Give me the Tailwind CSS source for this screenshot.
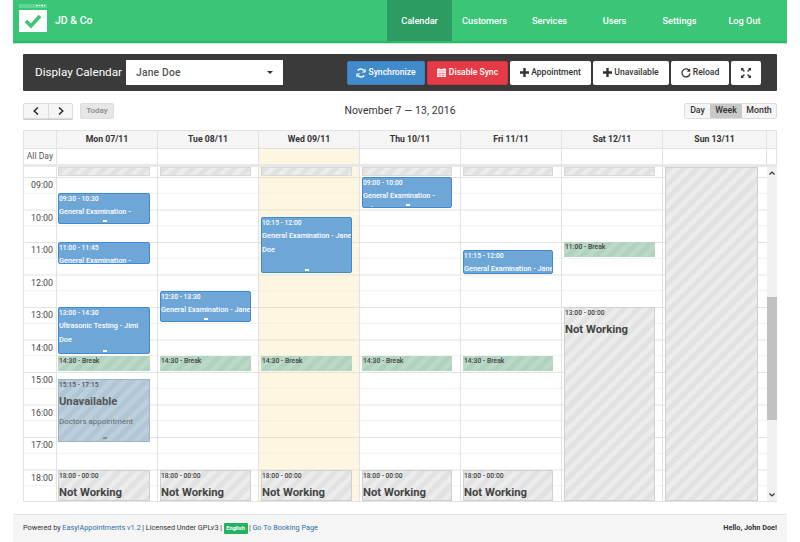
<!DOCTYPE html>
<html>
<head>
<meta charset="utf-8">
<script src="https://cdn.jsdelivr.net/npm/@tailwindcss/browser@4"></script>
</head>
<body class="bg-white font-['Roboto',sans-serif] text-[#333] w-[800px] h-[542px] overflow-hidden relative">

<header class="mx-[13px] h-[43px] flex bg-[#3ac577] border-b-2 border-[#2fb86c] shadow-[0_1px_0_#b8f0d0]">
  <div class="flex items-center flex-1 pl-[6px]">
    <div class="flex flex-col w-[28px] mt-[-6px]">
      <div class="h-[4px] bg-[#5fd695] flex justify-end items-center gap-[1px] pr-[2px]">
        <span class="w-[1.5px] h-[1.5px] bg-white"></span><span class="w-[1.5px] h-[1.5px] bg-white"></span><span class="w-[1.5px] h-[1.5px] bg-white"></span><span class="w-[1.5px] h-[1.5px] bg-white"></span>
      </div>
      <div class="h-[2px]"></div>
      <div class="h-[22px] bg-white flex items-center justify-center">
        <svg width="18" height="16" viewBox="0 0 18 16"><path d="M2 8 L7 13 L16 3" fill="none" stroke="#3ac577" stroke-width="3.6"/></svg>
      </div>
    </div>
    <span class="ml-[8px] text-[10.5px] text-white font-medium">JD &amp; Co</span>
  </div>
  <nav class="flex mr-[10px] text-[9.2px] font-medium text-white">
    <a class="w-[65px] h-[41px] flex items-center justify-center bg-[#2c9c62]">Calendar</a>
    <a class="w-[65px] h-[41px] flex items-center justify-center">Customers</a>
    <a class="w-[65px] h-[41px] flex items-center justify-center">Services</a>
    <a class="w-[65px] h-[41px] flex items-center justify-center">Users</a>
    <a class="w-[65px] h-[41px] flex items-center justify-center">Settings</a>
    <a class="w-[65px] h-[41px] flex items-center justify-center">Log Out</a>
  </nav>
</header>

<section class="mx-[23px] mt-[11px] h-[37px] bg-[#3a3a3a] flex items-center pl-[12px] rounded-[1px]">
  <span class="text-white text-[11.7px] w-[91px]">Display Calendar</span>
  <div class="w-[157px] h-[25px] bg-white flex items-center justify-between pl-[10px] pr-[10px] text-[10.3px] font-medium text-[#555] tracking-[0.2px]">
    <span>Jane Doe</span>
    <span class="w-0 h-0 border-x-[3px] border-x-transparent border-t-[3px] border-t-[#333]"></span>
  </div>
  <div class="ml-[64px] flex gap-[2px] text-[8.6px] font-medium">
    <div class="w-[78px] h-[24px] rounded-[2px] bg-[#428bca] border border-[#3b7fb9] text-white flex items-center justify-center gap-[2px]">
      <svg width="10" height="10" viewBox="0 0 12 12" fill="none" stroke="#fff" stroke-width="1.6"><path d="M10.5 4.5A5 5 0 0 0 2 3"/><path d="M1.5 7.5A5 5 0 0 0 10 9"/><path d="M11 1v4H7" stroke-width="1"/><path d="M1 11V7h4" stroke-width="1"/></svg>
      <span>Synchronize</span>
    </div>
    <div class="w-[81px] h-[24px] rounded-[2px] bg-[#e53b46] border border-[#d9303c] text-white flex items-center justify-center gap-[3px]">
      <svg width="9" height="9" viewBox="0 0 10 10"><path d="M0 1h10v2H0z" fill="#fff"/><path d="M0 3.6h10V10H0z" fill="#fff"/><path d="M2 0v2M8 0v2" stroke="#fff"/><path d="M0 6h10M0 8h10M3.3 4v6M6.6 4v6" stroke="#e53b46" stroke-width=".5"/></svg>
      <span>Disable Sync</span>
    </div>
    <div class="w-[81px] h-[24px] rounded-[2px] bg-white text-[#333] flex items-center justify-center gap-[2px]">
      <svg width="9" height="9" viewBox="0 0 9 9"><path d="M3.3 0h2.4v3.3H9v2.4H5.7V9H3.3V5.7H0V3.3h3.3z" fill="#333"/></svg>
      <span>Appointment</span>
    </div>
    <div class="w-[76px] h-[24px] rounded-[2px] bg-white text-[#333] flex items-center justify-center gap-[2px]">
      <svg width="9" height="9" viewBox="0 0 9 9"><path d="M3.3 0h2.4v3.3H9v2.4H5.7V9H3.3V5.7H0V3.3h3.3z" fill="#333"/></svg>
      <span>Unavailable</span>
    </div>
    <div class="w-[58px] h-[24px] rounded-[2px] bg-white text-[#333] flex items-center justify-center gap-[2px]">
      <svg width="10" height="10" viewBox="0 0 12 12" fill="none" stroke="#333" stroke-width="1.5"><path d="M10 3.2A4.8 4.8 0 1 0 10.8 6.5"/><path d="M11 .5V4.5H7z" fill="#333" stroke="none"/></svg>
      <span>Reload</span>
    </div>
    <div class="w-[30px] h-[24px] rounded-[2px] bg-white flex items-center justify-center">
      <svg width="10" height="10" viewBox="0 0 10 10" fill="none" stroke="#333" stroke-width="1.4"><path d="M1 1l2.4 2.4M9 1L6.6 3.4M1 9l2.4-2.4M9 9L6.6 6.6"/><path d="M0 0h3L0 3zM10 0H7l3 3zM0 10h3L0 7zM10 10H7l3-3z" fill="#333" stroke="none"/></svg>
    </div>
  </div>
</section>

<section class="mx-[23px] mt-[11px] h-[17px] flex items-center relative">
  <div class="flex h-[16px] border border-[#ddd] rounded-[2px] bg-[#f5f5f5] shadow-[0_1px_0_#ccc]">
    <div class="w-[25px] flex items-center justify-center border-r border-[#ddd]"><svg width="6" height="8" viewBox="0 0 6 8" fill="none" stroke="#222" stroke-width="1.4"><path d="M5 .5L1.2 4 5 7.5"/></svg></div>
    <div class="w-[23px] flex items-center justify-center"><svg width="6" height="8" viewBox="0 0 6 8" fill="none" stroke="#222" stroke-width="1.4"><path d="M1 .5L4.8 4 1 7.5"/></svg></div>
  </div>
  <div class="ml-[7px] w-[34px] h-[16px] rounded-[2px] bg-[#e6e6e6] border border-[#ddd] text-[8px] font-medium text-[#888] flex items-center justify-center">Today</div>
  <div class="flex-1 text-center text-[10.4px] text-[#333] tracking-[0.1px] pl-[2px]">November 7 — 13, 2016</div>
  <div class="flex h-[16px] text-[8.8px] font-medium rounded-[2px] border border-[#ddd] bg-[#f5f5f5] text-[#333]">
    <div class="w-[25px] flex items-center justify-center">Day</div>
    <div class="w-[32px] flex items-center justify-center bg-[#c8c8c8]">Week</div>
    <div class="w-[34px] flex items-center justify-center">Month</div>
  </div>
</section>

<section class="mx-[23px] mt-[11px] w-[754px] h-[372px] border-l border-t border-[#e2e2e2] relative">
  <!-- header row -->
  <div class="flex h-[18px] bg-[#f5f5f5] border-b border-[#e2e2e2] text-[8.7px] font-bold text-[#333]">
    <div class="w-[33px] border-r border-[#e2e2e2]"></div>
    <div class="w-[101px] border-r border-[#e2e2e2] flex items-center justify-center">Mon 07/11</div>
    <div class="w-[101px] border-r border-[#e2e2e2] flex items-center justify-center">Tue 08/11</div>
    <div class="w-[101px] border-r border-[#e2e2e2] flex items-center justify-center">Wed 09/11</div>
    <div class="w-[101px] border-r border-[#e2e2e2] flex items-center justify-center">Thu 10/11</div>
    <div class="w-[101px] border-r border-[#e2e2e2] flex items-center justify-center">Fri 11/11</div>
    <div class="w-[101px] border-r border-[#e2e2e2] flex items-center justify-center">Sat 12/11</div>
    <div class="w-[104px] border-r border-[#e2e2e2] flex items-center justify-center">Sun 13/11</div>
    <div class="flex-1 border-r border-[#e2e2e2]"></div>
  </div>
  <!-- all day row -->
  <div class="flex h-[15px] border-b-[3px] border-[#e8e8e8] text-[8.6px] text-[#555] box-content">
    <div class="w-[33px] border-r border-[#e2e2e2] flex items-center justify-end pr-[3px]">All Day</div>
    <div class="w-[101px] border-r border-[#e2e2e2]"></div>
    <div class="w-[101px] border-r border-[#e2e2e2]"></div>
    <div class="w-[101px] border-r border-[#e2e2e2] bg-[#fdf6e0]"></div>
    <div class="w-[101px] border-r border-[#e2e2e2]"></div>
    <div class="w-[101px] border-r border-[#e2e2e2]"></div>
    <div class="w-[101px] border-r border-[#e2e2e2]"></div>
    <div class="w-[104px] border-r border-[#e2e2e2]"></div>
    <div class="flex-1 border-r border-[#e2e2e2]"></div>
  </div>
  <!-- time grid -->
  <div class="flex h-[335px] overflow-hidden border-b border-[#e2e2e2] w-[753px]">
    <div class="w-[743px] flex h-full bg-[linear-gradient(to_bottom,#e2e2e2_0,#e2e2e2_1px,transparent_1px,transparent_16px,#f0f0f0_16px,#f0f0f0_17px,transparent_17px)] bg-[length:100%_32.5px] bg-[position:0_10px]">
      <div class="w-[33px] shrink-0 border-r border-[#e2e2e2] pt-[10px] text-[8.8px] text-[#444] text-right pr-[3px]">
        <div class="h-[32.5px] pt-[2px]">09:00</div>
        <div class="h-[32.5px] pt-[2px]">10:00</div>
        <div class="h-[32.5px] pt-[2px]">11:00</div>
        <div class="h-[32.5px] pt-[2px]">12:00</div>
        <div class="h-[32.5px] pt-[2px]">13:00</div>
        <div class="h-[32.5px] pt-[2px]">14:00</div>
        <div class="h-[32.5px] pt-[2px]">15:00</div>
        <div class="h-[32.5px] pt-[2px]">16:00</div>
        <div class="h-[32.5px] pt-[2px]">17:00</div>
        <div class="h-[32.5px] pt-[2px]">18:00</div>
      </div>

      <!-- Mon -->
      <div class="w-[101px] shrink-0 border-r border-[#e2e2e2] relative text-white">
        <div class="absolute left-[1px] w-[92px] top-0 h-[9px] border border-[#d8d8d8] bg-[repeating-linear-gradient(135deg,#e2e2e2_0,#e2e2e2_5px,#ececec_5px,#ececec_10px)]"></div>
        <div class="absolute left-[1px] w-[92px] top-[26px] h-[31px] overflow-hidden rounded-[2px] border border-[#3f8ad0] bg-[#6fa6d8] text-[7.3px] font-medium leading-[13.5px] whitespace-nowrap">
          <div class="text-[6.7px] leading-[11px]">09:30 - 10:30</div><div>General Examination -<br>Jane Doe</div>
          <span class="absolute bottom-[1px] left-[44px] w-[4px] h-[2px] bg-white"></span>
        </div>
        <div class="absolute left-[1px] w-[92px] top-[75px] h-[22px] overflow-hidden rounded-[2px] border border-[#3f8ad0] bg-[#6fa6d8] text-[7.3px] font-medium leading-[13.5px] whitespace-nowrap">
          <div class="text-[6.7px] leading-[11px]">11:00 - 11:45</div><div>General Examination -</div>
        </div>
        <div class="absolute left-[1px] w-[92px] top-[140px] h-[47px] overflow-hidden rounded-[2px] border border-[#3f8ad0] bg-[#6fa6d8] text-[7.3px] font-medium leading-[13.5px] whitespace-nowrap">
          <div class="text-[6.7px] leading-[11px]">13:00 - 14:30</div><div>Ultrasonic Testing - Jimi<br>Doe</div>
          <span class="absolute bottom-[1px] left-[44px] w-[4px] h-[2px] bg-white"></span>
        </div>
        <div class="absolute left-[1px] w-[92px] top-[189px] h-[15px] overflow-hidden bg-[repeating-linear-gradient(135deg,#b0d2be_0,#b0d2be_5px,#bcd9c7_5px,#bcd9c7_10px)] pl-[1px] text-[6.8px] font-medium leading-[11px] text-[#444]">14:30 - Break</div>
        <div class="absolute left-[1px] w-[92px] top-[212px] h-[63px] overflow-hidden border border-[#9db4c4] bg-[repeating-linear-gradient(135deg,#b0c6d6_0,#b0c6d6_5px,#bbcfdd_5px,#bbcfdd_10px)] text-[#555]">
          <div class="text-[6.7px] font-medium leading-[11px]">15:15 - 17:15</div>
          <div class="text-[11.2px] font-bold leading-[15px] mt-[3px]">Unavailable</div>
          <div class="text-[7.9px] leading-[12px] mt-[7px] text-[#666]">Doctors appointment</div>
          <span class="absolute bottom-[2px] left-[44px] w-[4px] h-[2px] bg-[#8a8a8a]"></span>
        </div>
        <div class="absolute left-[1px] w-[92px] top-[303px] h-[31px] overflow-hidden border border-[#d0d0d0] bg-[repeating-linear-gradient(135deg,#e2e2e2_0,#e2e2e2_5px,#ececec_5px,#ececec_10px)] text-[#444]">
          <div class="text-[6.7px] font-medium leading-[11px]">18:00 - 00:00</div>
          <div class="text-[11.3px] font-bold leading-[15px] mt-[3px]">Not Working</div>
        </div>
      </div>

      <!-- Tue -->
      <div class="w-[101px] shrink-0 border-r border-[#e2e2e2] relative text-white">
        <div class="absolute left-[2px] w-[91px] top-0 h-[9px] border border-[#d8d8d8] bg-[repeating-linear-gradient(135deg,#e2e2e2_0,#e2e2e2_5px,#ececec_5px,#ececec_10px)]"></div>
        <div class="absolute left-[2px] w-[91px] top-[124px] h-[31px] overflow-hidden rounded-[2px] border border-[#3f8ad0] bg-[#6fa6d8] text-[7.3px] font-medium leading-[13.5px] whitespace-nowrap">
          <div class="text-[6.7px] leading-[11px]">12:30 - 13:30</div><div>General Examination - Jane</div>
          <span class="absolute bottom-[1px] left-[43px] w-[4px] h-[2px] bg-white"></span>
        </div>
        <div class="absolute left-[2px] w-[91px] top-[189px] h-[15px] overflow-hidden bg-[repeating-linear-gradient(135deg,#b0d2be_0,#b0d2be_5px,#bcd9c7_5px,#bcd9c7_10px)] pl-[1px] text-[6.8px] font-medium leading-[11px] text-[#444]">14:30 - Break</div>
        <div class="absolute left-[2px] w-[91px] top-[303px] h-[31px] overflow-hidden border border-[#d0d0d0] bg-[repeating-linear-gradient(135deg,#e2e2e2_0,#e2e2e2_5px,#ececec_5px,#ececec_10px)] text-[#444]">
          <div class="text-[6.7px] font-medium leading-[11px]">18:00 - 00:00</div>
          <div class="text-[11.3px] font-bold leading-[15px] mt-[3px]">Not Working</div>
        </div>
      </div>

      <!-- Wed -->
      <div class="w-[101px] shrink-0 border-r border-[#e2e2e2] relative text-white bg-[#fdf6e0] bg-[linear-gradient(to_bottom,#e8e3d0_0,#e8e3d0_1px,transparent_1px,transparent_16px,#f5eed8_16px,#f5eed8_17px,transparent_17px)] bg-[length:100%_32.5px] bg-[position:0_10px]">
        <div class="absolute left-[2px] w-[91px] top-0 h-[9px] border border-[#d8d8d8] bg-[repeating-linear-gradient(135deg,#e2e2e2_0,#e2e2e2_5px,#ececec_5px,#ececec_10px)]"></div>
        <div class="absolute left-[2px] w-[91px] top-[50px] h-[56px] overflow-hidden rounded-[2px] border border-[#3f8ad0] bg-[#6fa6d8] text-[7.3px] font-medium leading-[13.5px] whitespace-nowrap">
          <div class="text-[6.7px] leading-[11px]">10:15 - 12:00</div><div>General Examination - Jane<br>Doe</div>
          <span class="absolute bottom-[1px] left-[43px] w-[4px] h-[2px] bg-white"></span>
        </div>
        <div class="absolute left-[2px] w-[91px] top-[189px] h-[15px] overflow-hidden bg-[repeating-linear-gradient(135deg,#b0d2be_0,#b0d2be_5px,#bcd9c7_5px,#bcd9c7_10px)] pl-[1px] text-[6.8px] font-medium leading-[11px] text-[#444]">14:30 - Break</div>
        <div class="absolute left-[2px] w-[91px] top-[303px] h-[31px] overflow-hidden border border-[#d0d0d0] bg-[repeating-linear-gradient(135deg,#e2e2e2_0,#e2e2e2_5px,#ececec_5px,#ececec_10px)] text-[#444]">
          <div class="text-[6.7px] font-medium leading-[11px]">18:00 - 00:00</div>
          <div class="text-[11.3px] font-bold leading-[15px] mt-[3px]">Not Working</div>
        </div>
      </div>

      <!-- Thu -->
      <div class="w-[101px] shrink-0 border-r border-[#e2e2e2] relative text-white">
        <div class="absolute left-[2px] w-[90px] top-0 h-[9px] border border-[#d8d8d8] bg-[repeating-linear-gradient(135deg,#e2e2e2_0,#e2e2e2_5px,#ececec_5px,#ececec_10px)]"></div>
        <div class="absolute left-[2px] w-[90px] top-[10px] h-[31px] overflow-hidden rounded-[2px] border border-[#3f8ad0] bg-[#6fa6d8] text-[7.3px] font-medium leading-[13.5px] whitespace-nowrap">
          <div class="text-[6.7px] leading-[11px]">09:00 - 10:00</div><div>General Examination -<br>Mike Doe</div>
          <span class="absolute bottom-[1px] left-[43px] w-[4px] h-[2px] bg-white"></span>
        </div>
        <div class="absolute left-[2px] w-[90px] top-[189px] h-[15px] overflow-hidden bg-[repeating-linear-gradient(135deg,#b0d2be_0,#b0d2be_5px,#bcd9c7_5px,#bcd9c7_10px)] pl-[1px] text-[6.8px] font-medium leading-[11px] text-[#444]">14:30 - Break</div>
        <div class="absolute left-[2px] w-[90px] top-[303px] h-[31px] overflow-hidden border border-[#d0d0d0] bg-[repeating-linear-gradient(135deg,#e2e2e2_0,#e2e2e2_5px,#ececec_5px,#ececec_10px)] text-[#444]">
          <div class="text-[6.7px] font-medium leading-[11px]">18:00 - 00:00</div>
          <div class="text-[11.3px] font-bold leading-[15px] mt-[3px]">Not Working</div>
        </div>
      </div>

      <!-- Fri -->
      <div class="w-[101px] shrink-0 border-r border-[#e2e2e2] relative text-white">
        <div class="absolute left-[2px] w-[90px] top-0 h-[9px] border border-[#d8d8d8] bg-[repeating-linear-gradient(135deg,#e2e2e2_0,#e2e2e2_5px,#ececec_5px,#ececec_10px)]"></div>
        <div class="absolute left-[2px] w-[90px] top-[83px] h-[24px] overflow-hidden rounded-[2px] border border-[#3f8ad0] bg-[#6fa6d8] text-[7.3px] font-medium leading-[13.5px] whitespace-nowrap">
          <div class="text-[6.7px] leading-[11px]">11:15 - 12:00</div><div>General Examination - Jane</div>
        </div>
        <div class="absolute left-[2px] w-[90px] top-[189px] h-[15px] overflow-hidden bg-[repeating-linear-gradient(135deg,#b0d2be_0,#b0d2be_5px,#bcd9c7_5px,#bcd9c7_10px)] pl-[1px] text-[6.8px] font-medium leading-[11px] text-[#444]">14:30 - Break</div>
        <div class="absolute left-[2px] w-[90px] top-[303px] h-[31px] overflow-hidden border border-[#d0d0d0] bg-[repeating-linear-gradient(135deg,#e2e2e2_0,#e2e2e2_5px,#ececec_5px,#ececec_10px)] text-[#444]">
          <div class="text-[6.7px] font-medium leading-[11px]">18:00 - 00:00</div>
          <div class="text-[11.3px] font-bold leading-[15px] mt-[3px]">Not Working</div>
        </div>
      </div>

      <!-- Sat -->
      <div class="w-[101px] shrink-0 border-r border-[#e2e2e2] relative text-white">
        <div class="absolute left-[2px] w-[91px] top-0 h-[9px] border border-[#d8d8d8] bg-[repeating-linear-gradient(135deg,#e2e2e2_0,#e2e2e2_5px,#ececec_5px,#ececec_10px)]"></div>
        <div class="absolute left-[2px] w-[91px] top-[75px] h-[15px] overflow-hidden bg-[repeating-linear-gradient(135deg,#b0d2be_0,#b0d2be_5px,#bcd9c7_5px,#bcd9c7_10px)] pl-[1px] text-[6.8px] font-medium leading-[11px] text-[#444]">11:00 - Break</div>
        <div class="absolute left-[2px] w-[91px] top-[140px] h-[194px] overflow-hidden border border-[#d0d0d0] bg-[repeating-linear-gradient(135deg,#e2e2e2_0,#e2e2e2_5px,#ececec_5px,#ececec_10px)] text-[#444]">
          <div class="text-[6.7px] font-medium leading-[11px]">13:00 - 00:00</div>
          <div class="text-[11.3px] font-bold leading-[15px] mt-[3px]">Not Working</div>
        </div>
      </div>

      <!-- Sun -->
      <div class="w-[104px] shrink-0 relative">
        <div class="absolute left-[2px] w-[93px] top-0 h-[334px] border border-[#d0d0d0] bg-[repeating-linear-gradient(135deg,#e2e2e2_0,#e2e2e2_5px,#ececec_5px,#ececec_10px)]"></div>
      </div>
    </div>

    <!-- scrollbar -->
    <div class="w-[10px] shrink-0 bg-[#f1f1f1] flex flex-col items-center relative">
      <svg class="mt-[4px]" width="6" height="4" viewBox="0 0 6 4" fill="none" stroke="#333" stroke-width="1.2"><path d="M.5 3.5L3 1l2.5 2.5"/></svg>
      <div class="absolute top-[130px] left-0 w-[10px] h-[123px] bg-[#c1c1c1]"></div>
      <svg class="absolute bottom-[4px]" width="6" height="4" viewBox="0 0 6 4" fill="none" stroke="#333" stroke-width="1.2"><path d="M.5 .5L3 3l2.5-2.5"/></svg>
    </div>
  </div>
</section>

<footer class="absolute left-[13px] top-[514px] w-[774px] h-[28px] bg-[#f5f5f5] border-t border-[#e3e3e3] flex items-center justify-between px-[10px] text-[7.3px] text-[#333]">
  <div class="flex items-center gap-[1.5px]">
    <span>Powered by</span>
    <a class="text-[#2a6fa8]">Easy!Appointments v1.2</a>
    <span>| Licensed Under GPLv3 |</span>
    <span class="w-[24px] h-[11px] bg-[#23b25f] text-white text-[5.6px] font-bold rounded-[1px] flex items-center justify-center">English</span>
    <span>|</span>
    <a class="text-[#2a6fa8]">Go To Booking Page</a>
  </div>
  <div class="font-bold text-[#333]">Hello, John Doe!</div>
</footer>
</body>
</html>
